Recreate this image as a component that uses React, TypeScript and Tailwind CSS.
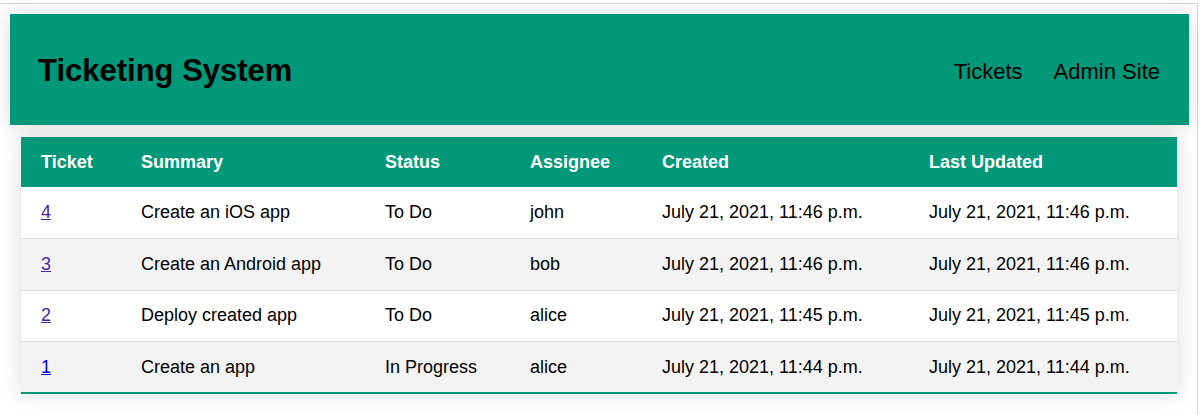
const tickets = [
  { id: 4, summary: "Create an iOS app", status: "To Do", assignee: "john", created: "July 21, 2021, 11:46 p.m.", updated: "July 21, 2021, 11:46 p.m.", visited: true },
  { id: 3, summary: "Create an Android app", status: "To Do", assignee: "bob", created: "July 21, 2021, 11:46 p.m.", updated: "July 21, 2021, 11:46 p.m.", visited: true },
  { id: 2, summary: "Deploy created app", status: "To Do", assignee: "alice", created: "July 21, 2021, 11:45 p.m.", updated: "July 21, 2021, 11:45 p.m.", visited: true },
  { id: 1, summary: "Create an app", status: "In Progress", assignee: "alice", created: "July 21, 2021, 11:44 p.m.", updated: "July 21, 2021, 11:44 p.m.", visited: false },
];

function Header() {
  return (
    <header className="flex h-[111px] items-center justify-between bg-[#009879] pt-[3px] pl-[28px] pr-[29px] shadow-[0_0_20px_rgba(0,0,0,0.15)]">
      <h1 className="text-[31px] font-bold text-black">Ticketing System</h1>
      <nav className="flex gap-[31px] text-[22px] text-black">
        <a href="#">Tickets</a>
        <a href="#">Admin Site</a>
      </nav>
    </header>
  );
}

function TicketTable() {
  return (
    <table className="mt-[12px] ml-[11px] w-[1156px] border-collapse text-left text-[18px] shadow-[0_0_20px_rgba(0,0,0,0.15)]">
      <thead>
        <tr className="h-[50px] bg-[#009879] text-white">
          <th className="w-[100px] pl-[20px] font-bold">Ticket</th>
          <th className="w-[244px] pl-[20px] font-bold">Summary</th>
          <th className="w-[145px] pl-[20px] font-bold">Status</th>
          <th className="w-[132px] pl-[20px] font-bold">Assignee</th>
          <th className="w-[267px] pl-[20px] font-bold">Created</th>
          <th className="pl-[20px] font-bold">Last Updated</th>
        </tr>
      </thead>
      <tbody>
        {tickets.map((t, i) => (
          <tr
            key={t.id}
            className={
              i === tickets.length - 1
                ? "h-[51.5px] border-b-2 border-[#009879] bg-[#f3f3f3]"
                : i % 2 === 1
                ? "h-[51.5px] border-b border-[#dddddd] bg-[#f3f3f3]"
                : "h-[51.5px] border-b border-[#dddddd] bg-white"
            }
          >
            <td className="pl-[20px]">
              <a href="#" className={t.visited ? "text-[#4a23a0] underline" : "text-[#0000ee] underline"}>
                {t.id}
              </a>
            </td>
            <td className="pl-[20px]">{t.summary}</td>
            <td className="pl-[20px]">{t.status}</td>
            <td className="pl-[20px]">{t.assignee}</td>
            <td className="pl-[20px]">{t.created}</td>
            <td className="pl-[20px]">{t.updated}</td>
          </tr>
        ))}
      </tbody>
    </table>
  );
}

export default function App() {
  return (
    <div className="h-[415px] w-[1200px] overflow-hidden bg-white pt-[3px] pr-[2px] font-['Liberation_Sans',Arial,sans-serif] text-black">
      <div className="h-full border-t border-r border-[#d6d6d6] pt-[10px] pl-[10px] pr-[8px]">
        <Header />
        <TicketTable />
      </div>
    </div>
  );
}
